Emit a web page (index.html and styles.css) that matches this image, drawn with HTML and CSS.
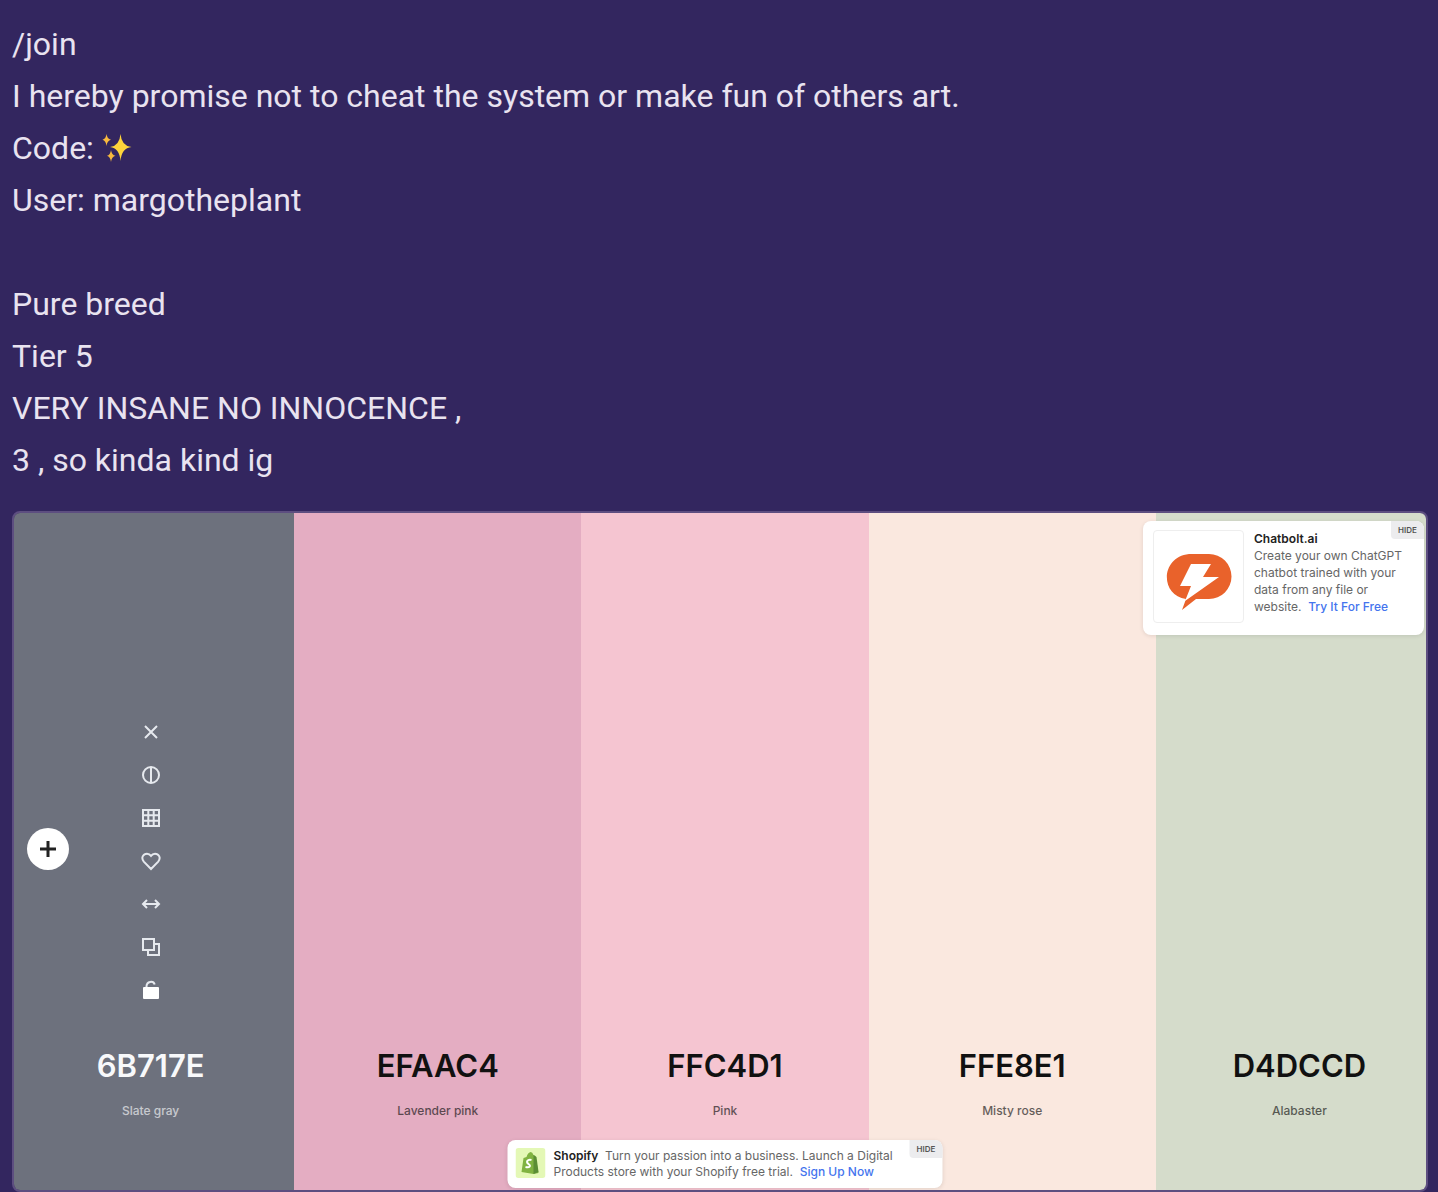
FILE: index.html
```html
<!DOCTYPE html>
<html lang="en">
<head>
    <meta charset="UTF-8">
    <meta name="viewport" content="width=device-width, initial-scale=1.0">
    <title>Join</title>
    <link rel="stylesheet" href="styles.css">
</head>
<body>
    <div class="message">
        <p>/join</p>
        <p>I hereby promise not to cheat the system or make fun of others art.</p>
        <p>Code:
            <svg class="sparkles" viewBox="0 0 30 30" role="img" aria-label="sparkles">
                <path fill="#fdd43b" d="M18.500 1Q19.500 13 29.500 14Q19.500 15 18.500 28Q17.500 15 8 14Q17.500 13 18.500 1Z"/>
                <path fill="#f8b93e" d="M4.500 1Q5.200 6 9 6.700Q5.200 7.400 4.500 13Q3.800 7.400 .5 6.700Q3.800 6 4.500 1ZM9 17Q9.700 22 13.500 22.800Q9.700 23.500 9 29Q8.300 23.500 5 22.800Q8.300 22 9 17Z"/>
            </svg>
        </p>
        <p>User: margotheplant</p>
        <br>
        <p>Pure breed</p>
        <p>Tier 5</p>
        <p>VERY INSANE NO INNOCENCE ,</p>
        <p>3 , so kinda kind ig</p>
    </div>

    <div class="attachment">
        <div class="palette">
            <div class="color slate">
                <div class="tools">
                    <button type="button" aria-label="Remove color">
                        <svg viewBox="0 0 20 20"><path d="M4 4l12 12M16 4L4 16"/></svg>
                    </button>
                    <button type="button" aria-label="Check contrast">
                        <svg viewBox="0 0 20 20"><circle cx="10" cy="10" r="8"/><path d="M10 2v16"/></svg>
                    </button>
                    <button type="button" aria-label="View shades">
                        <svg viewBox="0 0 20 20"><path d="M2 2h16v16H2zM7.300 2v16M12.700 2v16M2 7.300h16M2 12.700h16"/></svg>
                    </button>
                    <button type="button" aria-label="Save color">
                        <svg viewBox="0 0 20 20"><path d="M10 18L2.800 10.600C-.5 6.500 2.500 2.700 6 2.700Q8.500 2.700 10 4.800Q11.500 2.700 14 2.700C17.500 2.700 20.500 6.500 17.200 10.600Z"/></svg>
                    </button>
                    <button type="button" aria-label="Drag color">
                        <svg viewBox="0 0 20 20"><path d="M2 10h16M6 6l-4 4 4 4M14 6l4 4-4 4"/></svg>
                    </button>
                    <button type="button" aria-label="Copy HEX">
                        <svg viewBox="0 0 20 20"><path d="M2 2h11v11H2zM13 7h5v11H7v-5"/></svg>
                    </button>
                    <button type="button" aria-label="Toggle lock">
                        <svg viewBox="0 0 20 20"><path d="M5.500 8V6.500C5.500 1 12.500.5 13.700 4.500"/><rect class="solid" x="2" y="7" width="16" height="12" rx="1"/></svg>
                    </button>
                </div>
                <h2>6B717E</h2>
                <span>Slate gray</span>
            </div>
            <div class="color lavender">
                <h2>EFAAC4</h2>
                <span>Lavender pink</span>
            </div>
            <div class="color pink">
                <h2>FFC4D1</h2>
                <span>Pink</span>
            </div>
            <div class="color misty">
                <h2>FFE8E1</h2>
                <span>Misty rose</span>
            </div>
            <div class="color alabaster">
                <h2>D4DCCD</h2>
                <span>Alabaster</span>
            </div>

            <!-- bottom ad -->
            <div class="ad ad-bottom">
                <svg class="shopify" viewBox="0 0 30 30" aria-hidden="true">
                    <rect width="30" height="30" rx="3" fill="#e4f8b6"/>
                    <path fill="#80b341" d="M8 10l3-1q1-4 4-5 2 0 3 3l2 1 3 17-5 1-12-2z"/>
                    <path fill="#5b8e35" d="M18 7l3 2 2 15-5 2z"/>
                    <path fill="none" stroke="#fff" stroke-width="2" d="M16 12c-4-1-6 2-3 4s1 4-3 3"/>
                </svg>
                <p><strong>Shopify</strong>&nbsp; Turn your passion into a business. Launch a Digital Products store with your Shopify free trial.&nbsp; <a href="#">Sign Up Now</a></p>
                <button type="button" class="hide">HIDE</button>
            </div>
        </div>

        <button type="button" class="add" aria-label="Add color">
            <svg viewBox="0 0 20 20"><path d="M10 2v16M2 10h16"/></svg>
        </button>

        <!-- top ad -->
        <div class="ad ad-top">
            <div class="logo">
                <svg viewBox="0 0 66 58" aria-hidden="true">
                    <path fill="#e9622b" d="M23 1h20a22 22 0 0 1 0 45H30L16 57l4-11C-6 43-6 4 23 1z"/>
                    <path fill="#fff" d="M25 11h20l-8 13h16L19 48l6-15H14z"/>
                </svg>
            </div>
            <p><strong>Chatbolt.ai</strong><br>Create your own ChatGPT chatbot trained with your data from any file or website.&nbsp; <a href="#">Try It For Free</a></p>
            <button type="button" class="hide">HIDE</button>
        </div>
    </div>
</body>
</html>
```

FILE: styles.css
```css
* {
    box-sizing: border-box;
}
body {
    display: flex;
    flex-direction: column;
    min-height: 100vh;
    margin: 0;
    padding: 18px 10px 0 12px;
    background: #33265f;
    color: #e9e3f0;
    font-family: Roboto, sans-serif;
}
p, h2 {
    margin: 0;
}
button {
    padding: 0;
    border: none;
    background: none;
    cursor: pointer;
}
.message {
    font-size: 32px;
    line-height: 52px;
    margin-bottom: 25px;
}
.sparkles {
    width: 30px;
    height: 30px;
    vertical-align: -4px;
}
.attachment {
    position: relative;
    display: flex;
    flex: 1;
    overflow: hidden;
    border: 2px solid #5d4e80;
    border-radius: 8px;
    font-family: Inter, sans-serif;
}
/* the palette runs a little past both edges of the frame */
.palette {
    position: relative;
    display: grid;
    grid-template-columns: repeat(5, 1fr);
    flex: 1;
    margin: 0 -17px 0 -7px;
}
.color {
    display: flex;
    flex-direction: column;
    justify-content: flex-end;
    align-items: center;
    padding: 24px 0 71px;
    color: #111;
}
.color h2 {
    margin-bottom: 17px;
    font-size: 31px;
    font-weight: 600;
    line-height: 40px;
}
.color span {
    font-size: 12px;
    font-weight: 500;
    line-height: 16px;
    opacity: 0.65;
}
.slate {
    background: #6d717d;
    color: #f8f9fb;
}
.lavender {
    background: #e4adc2;
}
.pink {
    background: #f5c5d1;
}
.misty {
    background: #fae8df;
}
.alabaster {
    background: #d5dccb;
}
.tools {
    display: flex;
    flex-direction: column;
    margin-bottom: 35px;
}
.tools button {
    display: flex;
    align-items: center;
    justify-content: center;
    width: 43px;
    height: 43px;
}
.tools svg, .add svg {
    width: 20px;
    height: 20px;
    fill: none;
    stroke: #e6e9ee;
    stroke-width: 2;
}
.tools .solid {
    fill: #fff;
    stroke: none;
}
.add {
    position: absolute;
    top: 50%;
    left: 13px;
    display: flex;
    align-items: center;
    justify-content: center;
    width: 42px;
    height: 42px;
    margin-top: -24px;
    border-radius: 50%;
    background: #fff;
}
.add svg {
    stroke: #222;
    stroke-width: 3;
}
.ad {
    position: absolute;
    display: flex;
    border-radius: 8px;
    background: #fff;
    color: #666;
    font-size: 12px;
    box-shadow: 0 1px 4px rgba(0, 0, 0, 0.1);
}
.ad strong {
    color: #222;
    font-weight: 600;
}
.ad a {
    color: #4474ee;
    font-weight: 500;
    text-decoration: none;
}
.ad-top {
    top: 8px;
    right: 2px;
    gap: 10px;
    width: 281px;
    padding: 9px 16px 12px 10px;
    line-height: 17px;
}
.ad-bottom {
    bottom: 2px;
    left: 50%;
    gap: 8px;
    width: 435px;
    padding: 8px 40px 8px 8px;
    line-height: 16px;
    transform: translateX(-50%);
}
.logo {
    display: flex;
    align-items: center;
    justify-content: center;
    flex: 0 0 91px;
    height: 93px;
    padding-top: 10px;
    border: 1px solid #eee;
    border-radius: 4px;
}
.logo svg {
    width: 66px;
    height: 58px;
}
.shopify {
    flex: 0 0 30px;
    height: 30px;
}
.hide {
    position: absolute;
    top: 0;
    right: 0;
    width: 33px;
    height: 18px;
    border-radius: 0 8px 0 4px;
    background: #ececee;
    color: #555;
    font-family: Inter, sans-serif;
    font-size: 8px;
    font-weight: 600;
}
```
